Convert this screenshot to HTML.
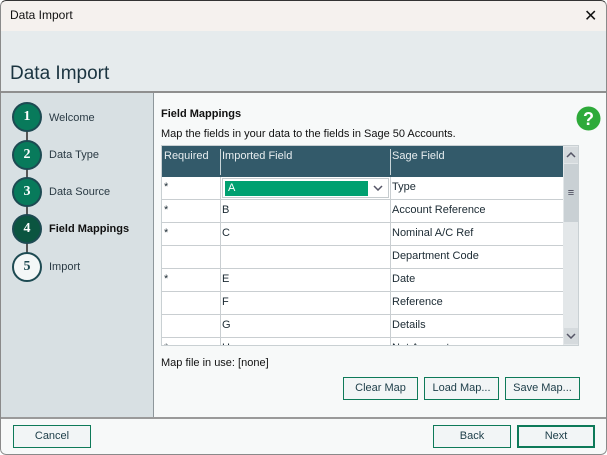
<!DOCTYPE html>
<html><head><style>
*{margin:0;padding:0;box-sizing:border-box}
body{width:607px;height:455px;overflow:hidden;background:#fff;font-family:"Liberation Sans",sans-serif;font-size:11px;color:#1b2a33;position:relative}
.win{position:absolute;left:0;top:0;width:607px;height:455px;overflow:hidden;background:#f7f9f9;border-radius:6px}
.frame{position:absolute;left:0;top:0;width:607px;height:455px;border:1px solid #8a8a8a;border-top:1px solid #333;border-radius:6px;pointer-events:none}
.title{position:absolute;left:0;top:0;width:607px;height:31px;background:#f5f1ee}
.title span{position:absolute;left:10px;top:8px;font-size:12px;color:#111}
.x{position:absolute;left:584px;top:6px;font-size:16px;color:#111}
.hdr{position:absolute;left:0;top:31px;width:607px;height:62px;background:#e6ebed;border-bottom:2px solid #8f8f8f}
.hdr span{position:absolute;left:10px;top:32px;font-size:19px;color:#1b3440}
.left{position:absolute;left:0;top:93px;width:154px;height:325px;background:#d8e0e3;border-right:1px solid #8e979b}
.step{position:absolute;left:12px;width:30px;height:30px;border-radius:50%;border:2px solid #1d4a52;background:#087a5b;color:#fff;font-family:"Liberation Serif",serif;font-weight:bold;font-size:14px;text-align:center;line-height:26px}
.lbl{position:absolute;left:49px;font-size:11px;color:#2a3a44}
.vline{position:absolute;left:26px;top:117px;width:2px;height:150px;background:#555}
.tbl{position:absolute;left:161px;top:145px;width:418px;height:201px;border:1px solid #c9d0d3;background:#fff;overflow:hidden}
.th{position:absolute;left:0;top:0;width:401px;height:31px;background:#335a6a;color:#e8eef0}
.th span{position:absolute;top:4px}
.th i{position:absolute;top:3px;width:1px;height:26px;background:#c8d4d8}
.row{position:absolute;left:0;width:401px;height:23px;border-bottom:1px solid #c9ced1}
.row span{position:absolute;top:4px}
.cl{position:absolute;top:31px;width:1px;height:170px;background:#c9ced1}
.sb{position:absolute;left:401px;top:0;width:16px;height:200px;background:#e3e7e9}
.btn{position:absolute;height:23px;border:1px solid #0e7a59;background:#f2f5f6;color:#1c3d48;font-size:11px;text-align:center;line-height:21px}
.bot{position:absolute;left:0;top:417px;width:607px;height:2px;background:#9a9a9a}
</style></head><body><div class="win">
<div class="title"><span>Data Import</span><div class="x">✕</div></div>
<div class="hdr"><span>Data Import</span></div>
<div class="left"></div>
<div class="vline"></div>
<div class="step" style="top:102px">1</div><div class="lbl" style="top:112px">Welcome</div>
<div class="step" style="top:140px">2</div><div class="lbl" style="top:149px">Data Type</div>
<div class="step" style="top:177px">3</div><div class="lbl" style="top:186px">Data Source</div>
<div class="step" style="top:214px;background:#0b5540">4</div><div class="lbl" style="top:223px;font-weight:bold;color:#111">Field Mappings</div>
<div class="step" style="top:252px;background:#f4f7f7;color:#1d4a52">5</div><div class="lbl" style="top:261px">Import</div>
<div style="position:absolute;left:161px;top:108px;font-weight:bold;font-size:11px;color:#111">Field Mappings</div>
<div style="position:absolute;left:161px;top:128px;color:#111">Map the fields in your data to the fields in Sage 50 Accounts.</div>
<svg style="position:absolute;left:576px;top:106px" width="25" height="25" viewBox="0 0 25 25"><circle cx="12.5" cy="12.5" r="12" fill="#2eaa3a"/><text x="12.5" y="19" text-anchor="middle" font-family="Liberation Sans" font-weight="bold" font-size="18" fill="#fff">?</text></svg>
<div class="tbl">
<div class="th"><span style="left:2px">Required</span><i style="left:58px"></i><span style="left:60px">Imported Field</span><i style="left:228px"></i><span style="left:230px">Sage Field</span></div>
<div class="row" style="top:31px"><span style="left:2px">*</span><span style="left:230px;top:4px">Type</span>
<div style="position:absolute;left:60px;top:1px;width:167px;height:20px;border:1px solid #c5cbce;background:#fff"><div style="position:absolute;left:2px;top:2px;width:143px;height:15px;background:#00a070;color:#fff;padding-left:3px;line-height:15px">A</div><svg style="position:absolute;left:150px;top:6px" width="10" height="6"><path d="M1 1L5 5L9 1" stroke="#556" stroke-width="1.5" fill="none"/></svg></div></div>
<div class="row" style="top:54px"><span style="left:2px">*</span><span style="left:60px">B</span><span style="left:230px">Account Reference</span></div>
<div class="row" style="top:77px"><span style="left:2px">*</span><span style="left:60px">C</span><span style="left:230px">Nominal A/C Ref</span></div>
<div class="row" style="top:100px"><span style="left:230px">Department Code</span></div>
<div class="row" style="top:123px"><span style="left:2px">*</span><span style="left:60px">E</span><span style="left:230px">Date</span></div>
<div class="row" style="top:146px"><span style="left:60px">F</span><span style="left:230px">Reference</span></div>
<div class="row" style="top:169px"><span style="left:60px">G</span><span style="left:230px">Details</span></div>
<div class="row" style="top:192px"><span style="left:2px">*</span><span style="left:60px">H</span><span style="left:230px">Net Amount</span></div>
<div class="cl" style="left:58px"></div><div class="cl" style="left:228px"></div>
<div class="sb"><div style="position:absolute;left:1px;top:1px;width:14px;height:16px;background:#d5dadd"><svg style="position:absolute;left:2px;top:5px" width="10" height="6"><path d="M1 5L5 1L9 5" stroke="#556" stroke-width="1.5" fill="none"/></svg></div><div style="position:absolute;left:1px;top:18px;width:14px;height:58px;background:#c9d0d4;text-align:center;line-height:58px;color:#445">≡</div><div style="position:absolute;left:1px;top:182px;width:14px;height:16px;background:#d5dadd"><svg style="position:absolute;left:2px;top:5px" width="10" height="6"><path d="M1 1L5 5L9 1" stroke="#556" stroke-width="1.5" fill="none"/></svg></div></div>
</div>
<div style="position:absolute;left:161px;top:357px;color:#111">Map file in use: [none]</div>
<div class="btn" style="left:343px;top:377px;width:75px">Clear Map</div>
<div class="btn" style="left:424px;top:377px;width:75px">Load Map...</div>
<div class="btn" style="left:505px;top:377px;width:75px">Save Map...</div>
<div class="bot"></div>
<div class="btn" style="left:13px;top:425px;width:78px">Cancel</div>
<div class="btn" style="left:433px;top:425px;width:78px">Back</div>
<div class="btn" style="left:517px;top:425px;width:78px;border:2px solid #0e7a59;line-height:19px">Next</div>
<div class="frame"></div>
</div></body></html>
